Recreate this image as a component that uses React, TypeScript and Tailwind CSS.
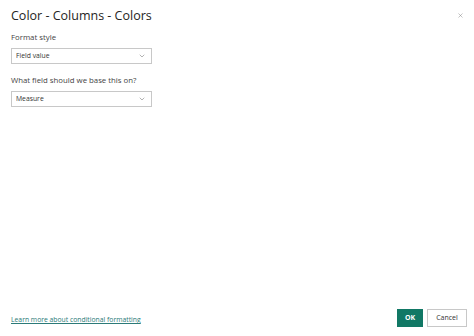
import { ChevronDown, X } from 'lucide-react';

function Dropdown({ value }: { value: string }) {
  return (
    <div className="mt-[5px] flex h-[16px] w-[141px] items-center justify-between border border-[#c8c8c8] bg-white pl-[4px] pr-[5px]">
      <span className="text-[6.8px] leading-none text-[#333]">{value}</span>
      <ChevronDown className="h-[8px] w-[8px] text-[#666]" strokeWidth={1.5} />
    </div>
  );
}

export default function App() {
  return (
    <div
      className="flex h-[336px] w-[474px] flex-col bg-white px-[11px] pb-[9px] pt-[8px]"
      style={{ fontFamily: '"Open Sans", "Noto Sans", sans-serif' }}
    >
      <div className="flex items-start justify-between">
        <h1 className="text-[12.5px] leading-[16px] text-[#252423]">Color - Columns - Colors</h1>
        <X className="mr-[-1px] mt-[4px] h-[7px] w-[7px] text-[#777]" strokeWidth={1.5} />
      </div>

      <div className="mt-[7px] text-[7.8px] leading-[12px] text-[#444]">Format style</div>
      <Dropdown value="Field value" />

      <div className="mt-[10px] text-[7.8px] leading-[12px] text-[#444]">What field should we base this on?</div>
      <Dropdown value="Measure" />

      <div className="flex-1" />

      <div className="flex items-end justify-between">
        <a href="#" className="mb-[3px] text-[6.8px] leading-none text-[#2b7a78] underline">
          Learn more about conditional formatting
        </a>
        <div className="mr-[-4px] flex gap-[4px]">
          <button className="h-[18px] w-[26px] bg-[#117865] text-[7px] font-bold text-white">OK</button>
          <button className="h-[18px] w-[40px] border border-[#c8c8c8] bg-white text-[7px] text-[#333]">Cancel</button>
        </div>
      </div>
    </div>
  );
}
